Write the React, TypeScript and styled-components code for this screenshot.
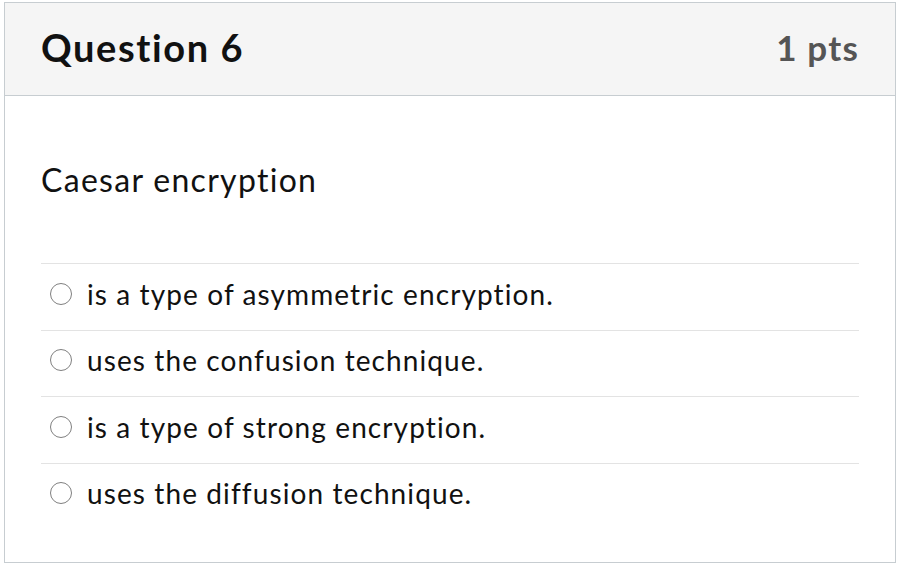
import React from 'react'
import styled, { createGlobalStyle } from 'styled-components'

const GlobalStyle = createGlobalStyle`
  html, body {
    margin: 0;
    padding: 0;
    background: #ffffff;
  }
  body {
    font-family: Lato, 'Liberation Sans', sans-serif;
  }
`

const Page = styled.div`
  padding: 2px 0 0 4px;
`

const Card = styled.div`
  width: 890px;
  height: 559px;
  border: 1px solid #c7cdd1;
  display: flex;
  flex-direction: column;
  color: #2d3b45;
`

const Header = styled.div`
  height: 93px;
  box-sizing: border-box;
  display: flex;
  align-items: center;
  justify-content: space-between;
  padding: 0 36px 4px 36px;
  background: #f5f5f5;
  border-bottom: 1px solid #c7cdd1;
`

const Title = styled.h2`
  margin: 0;
  font-size: 38px;
  letter-spacing: 1.6px;
  font-weight: 700;
  color: #111111;
`

const Points = styled.span`
  font-size: 35px;
  letter-spacing: 1.2px;
  font-weight: 700;
  color: #555555;
`

const Body = styled.div`
  padding: 64px 36px 0 36px;
`

const Prompt = styled.p`
  margin: 0 0 63px 0;
  font-size: 32px;
  letter-spacing: 1.3px;
  line-height: 40px;
  color: #111111;
`

const Answers = styled.ul`
  list-style: none;
  margin: 0;
  padding: 0;
`

const Answer = styled.li`
  height: 66.5px;
  box-sizing: border-box;
  padding-bottom: 6px;
  display: flex;
  align-items: center;
  border-top: 1px solid #e3e3e3;
`

const Radio = styled.span`
  width: 22px;
  height: 22px;
  border: 1.5px solid #808080;
  border-radius: 50%;
  margin: 0 15px 0 9px;
  box-sizing: border-box;
  flex-shrink: 0;
`

const AnswerText = styled.span`
  font-size: 28px;
  letter-spacing: 1.1px;
  color: #111111;
`

const options = [
  'is a type of asymmetric encryption.',
  'uses the confusion technique.',
  'is a type of strong encryption.',
  'uses the diffusion technique.',
]

export default function App() {
  return (
    <>
      <GlobalStyle />
      <Page>
        <Card>
          <Header>
            <Title>Question 6</Title>
            <Points>1 pts</Points>
          </Header>
          <Body>
            <Prompt>Caesar encryption</Prompt>
            <Answers>
              {options.map((o) => (
                <Answer key={o}>
                  <Radio />
                  <AnswerText>{o}</AnswerText>
                </Answer>
              ))}
            </Answers>
          </Body>
        </Card>
      </Page>
    </>
  )
}
